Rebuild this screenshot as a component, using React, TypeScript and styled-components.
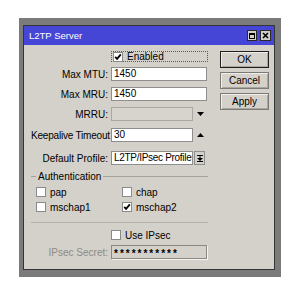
import { createGlobalStyle, styled } from "styled-components"

const GlobalStyle = createGlobalStyle`
  body {
    margin: 0;
    background: #ffffff;
    font-family: "Liberation Sans", Arial, sans-serif;
    font-size: 10px;
    color: #000;
  }
`

const Page = styled.div`
  padding: 18px 0 0 19px;
`

const Frame = styled.div`
  width: 262px;
  height: 259px;
  box-sizing: border-box;
  padding: 7px 6px 7px 4px;
  background: #7b7b7b;
  display: flex;
`

const Window = styled.div`
  flex: 1;
  display: flex;
  flex-direction: column;
  border: 1px solid #353535;
  background: #d4d1ca;
`

const TitleBar = styled.div`
  height: 19px;
  background: #4646d6;
  display: flex;
  align-items: center;
  padding: 0 3px 0 5px;
  color: #ffffff;
  font-size: 9.5px;
`

const Title = styled.span`
  flex: 1;
`

const TitleButton = styled.div<{ $w: number }>`
  width: ${p => p.$w}px;
  height: 11px;
  box-sizing: border-box;
  margin-left: 3px;
  background: #d4d1ca;
  border: 1px solid #2a2a2a;
  display: flex;
  align-items: center;
  justify-content: center;
`

const Body = styled.div`
  display: flex;
  gap: 12px;
  padding: 6px 5px 0 7px;
`

const Form = styled.div`
  width: 177px;
  display: flex;
  flex-direction: column;
`

const Row = styled.div<{ $top: number }>`
  display: flex;
  align-items: center;
  height: 14px;
  margin-top: ${p => p.$top}px;
`

const Label = styled.div<{ $disabled?: boolean; $tight?: boolean }>`
  width: 77px;
  flex: none;
  margin-right: 3px;
  text-align: right;
  white-space: nowrap;
  letter-spacing: ${p => (p.$tight ? "-0.2px" : "normal")};
  color: ${p => (p.$disabled ? "#8d8b87" : "#000")};
`

const Input = styled.div<{ $w: number; $disabled?: boolean }>`
  width: ${p => p.$w}px;
  height: 14px;
  box-sizing: border-box;
  padding-left: 2px;
  border: 1px solid ${p => (p.$disabled ? "#a9a7a2" : "#8e8e8e")};
  background: ${p => (p.$disabled ? "#d7d4ce" : "#ffffff")};
  line-height: 12px;
  white-space: nowrap;
  overflow: hidden;
`

const SecretInput = styled(Input)`
  border-color: #8a8884;
  background: #d4d1ca;
  box-shadow: 1px 1px 0 #f4f3f0;
  letter-spacing: 2px;
  font-weight: bold;
  line-height: 15px;
`

const ArrowCell = styled.div`
  width: 15px;
  display: flex;
  justify-content: center;
`

const DropButton = styled.div`
  width: 11px;
  height: 14px;
  box-sizing: border-box;
  margin-left: 1px;
  border: 1px solid #8e8e8e;
  background: #d4d1ca;
  display: flex;
  align-items: center;
  justify-content: center;
`

const ProfileText = styled(Input)`
  letter-spacing: -0.3px;
`

const CheckRow = styled.div<{ $top: number; $indent: number }>`
  display: flex;
  align-items: center;
  height: 10px;
  margin-top: ${p => p.$top}px;
  margin-left: ${p => p.$indent}px;
  gap: 4px;
`

const FocusBox = styled.div`
  display: flex;
  align-items: center;
  gap: 4px;
  width: 97px;
  height: 11px;
  margin-left: 80px;
  box-sizing: border-box;
  padding-left: 1px;
  border: 1px dotted #5a5a5a;
`

const Box = styled.div`
  width: 10px;
  height: 10px;
  box-sizing: border-box;
  border: 1px solid #8a8a8a;
  background: #ffffff;
  display: flex;
  align-items: center;
  justify-content: center;
  flex: none;
`

const GroupHeader = styled.div`
  display: flex;
  align-items: center;
  height: 10px;
  margin-top: 6px;
  gap: 2px;
`

const Line = styled.div<{ $w?: number }>`
  height: 1px;
  background: #a4a19b;
  ${p => (p.$w ? `width: ${p.$w}px;` : "flex: 1;")}
`

const AuthGrid = styled.div`
  display: grid;
  grid-template-columns: 86px 1fr;
  row-gap: 5px;
  margin-top: 6px;
  padding-left: 5px;
`

const AuthItem = styled.div`
  display: flex;
  align-items: center;
  height: 10px;
  gap: 4px;
`

const Separator = styled.div`
  height: 1px;
  margin-top: 10px;
  background: #b3b0aa;
`

const Buttons = styled.div`
  display: flex;
  flex-direction: column;
  gap: 4px;
`

const Button = styled.div<{ $default?: boolean }>`
  width: 49px;
  height: 17px;
  box-sizing: border-box;
  border: 1px solid ${p => (p.$default ? "#1e1e1e" : "#7c7a76")};
  box-shadow: inset 1px 1px 0 #f0eee9, inset -1px -1px 0 #a9a6a0;
  background: #d4d1ca;
  display: flex;
  align-items: center;
  justify-content: center;
`

const Check = ({ checked }: { checked?: boolean }) => (
  <Box>
    {checked && (
      <svg width="8" height="8" viewBox="0 0 8 8">
        <path d="M1.2 3.8 L3.1 5.9 L6.8 1.4" fill="none" stroke="#000" strokeWidth="1.8" />
      </svg>
    )}
  </Box>
)

const Triangle = ({ up }: { up?: boolean }) => (
  <svg width="7" height="4" viewBox="0 0 7 4">
    <path d={up ? "M0 4 L3.5 0 L7 4 Z" : "M0 0 L7 0 L3.5 4 Z"} fill="#000" />
  </svg>
)

export default function App() {
  return (
    <>
      <GlobalStyle />
      <Page>
        <Frame>
          <Window>
            <TitleBar>
              <Title>L2TP Server</Title>
              <TitleButton $w={10}>
                <svg width="6" height="6" viewBox="0 0 6 6">
                  <rect x="0.5" y="0.5" width="5" height="5" fill="none" stroke="#000" />
                  <rect x="0" y="0" width="6" height="2" fill="#000" />
                </svg>
              </TitleButton>
              <TitleButton $w={11}>
                <svg width="7" height="7" viewBox="0 0 7 7">
                  <path d="M1 1 L6 6 M6 1 L1 6" stroke="#000" strokeWidth="1.6" />
                </svg>
              </TitleButton>
            </TitleBar>
            <Body>
              <Form>
                <FocusBox>
                  <Check checked />
                  <span>Enabled</span>
                </FocusBox>
                <Row $top={5}>
                  <Label>Max MTU:</Label>
                  <Input $w={96}>1450</Input>
                </Row>
                <Row $top={6}>
                  <Label>Max MRU:</Label>
                  <Input $w={96}>1450</Input>
                </Row>
                <Row $top={6}>
                  <Label>MRRU:</Label>
                  <Input $w={82} $disabled />
                  <ArrowCell>
                    <Triangle />
                  </ArrowCell>
                </Row>
                <Row $top={7}>
                  <Label $tight>Keepalive Timeout</Label>
                  <Input $w={82}>30</Input>
                  <ArrowCell>
                    <Triangle up />
                  </ArrowCell>
                </Row>
                <Row $top={9}>
                  <Label>Default Profile:</Label>
                  <ProfileText $w={82}>L2TP/IPsec Profile</ProfileText>
                  <DropButton>
                    <svg width="6" height="7" viewBox="0 0 6 7">
                      <rect x="0" y="0" width="6" height="1" fill="#000" />
                      <rect x="2.5" y="1" width="1" height="2" fill="#000" />
                      <path d="M0 3 L6 3 L3 6 Z" fill="#000" />
                      <rect x="0" y="6" width="6" height="1" fill="#000" />
                    </svg>
                  </DropButton>
                </Row>
                <GroupHeader>
                  <Line $w={5} />
                  <span>Authentication</span>
                  <Line />
                </GroupHeader>
                <AuthGrid>
                  <AuthItem>
                    <Check />
                    <span>pap</span>
                  </AuthItem>
                  <AuthItem>
                    <Check />
                    <span>chap</span>
                  </AuthItem>
                  <AuthItem>
                    <Check />
                    <span>mschap1</span>
                  </AuthItem>
                  <AuthItem>
                    <Check checked />
                    <span>mschap2</span>
                  </AuthItem>
                </AuthGrid>
                <Separator />
                <CheckRow $top={7} $indent={80}>
                  <Check />
                  <span>Use IPsec</span>
                </CheckRow>
                <Row $top={5}>
                  <Label $disabled>IPsec Secret:</Label>
                  <SecretInput $w={96}>***********</SecretInput>
                </Row>
              </Form>
              <Buttons>
                <Button $default>OK</Button>
                <Button>Cancel</Button>
                <Button>Apply</Button>
              </Buttons>
            </Body>
          </Window>
        </Frame>
      </Page>
    </>
  )
}
